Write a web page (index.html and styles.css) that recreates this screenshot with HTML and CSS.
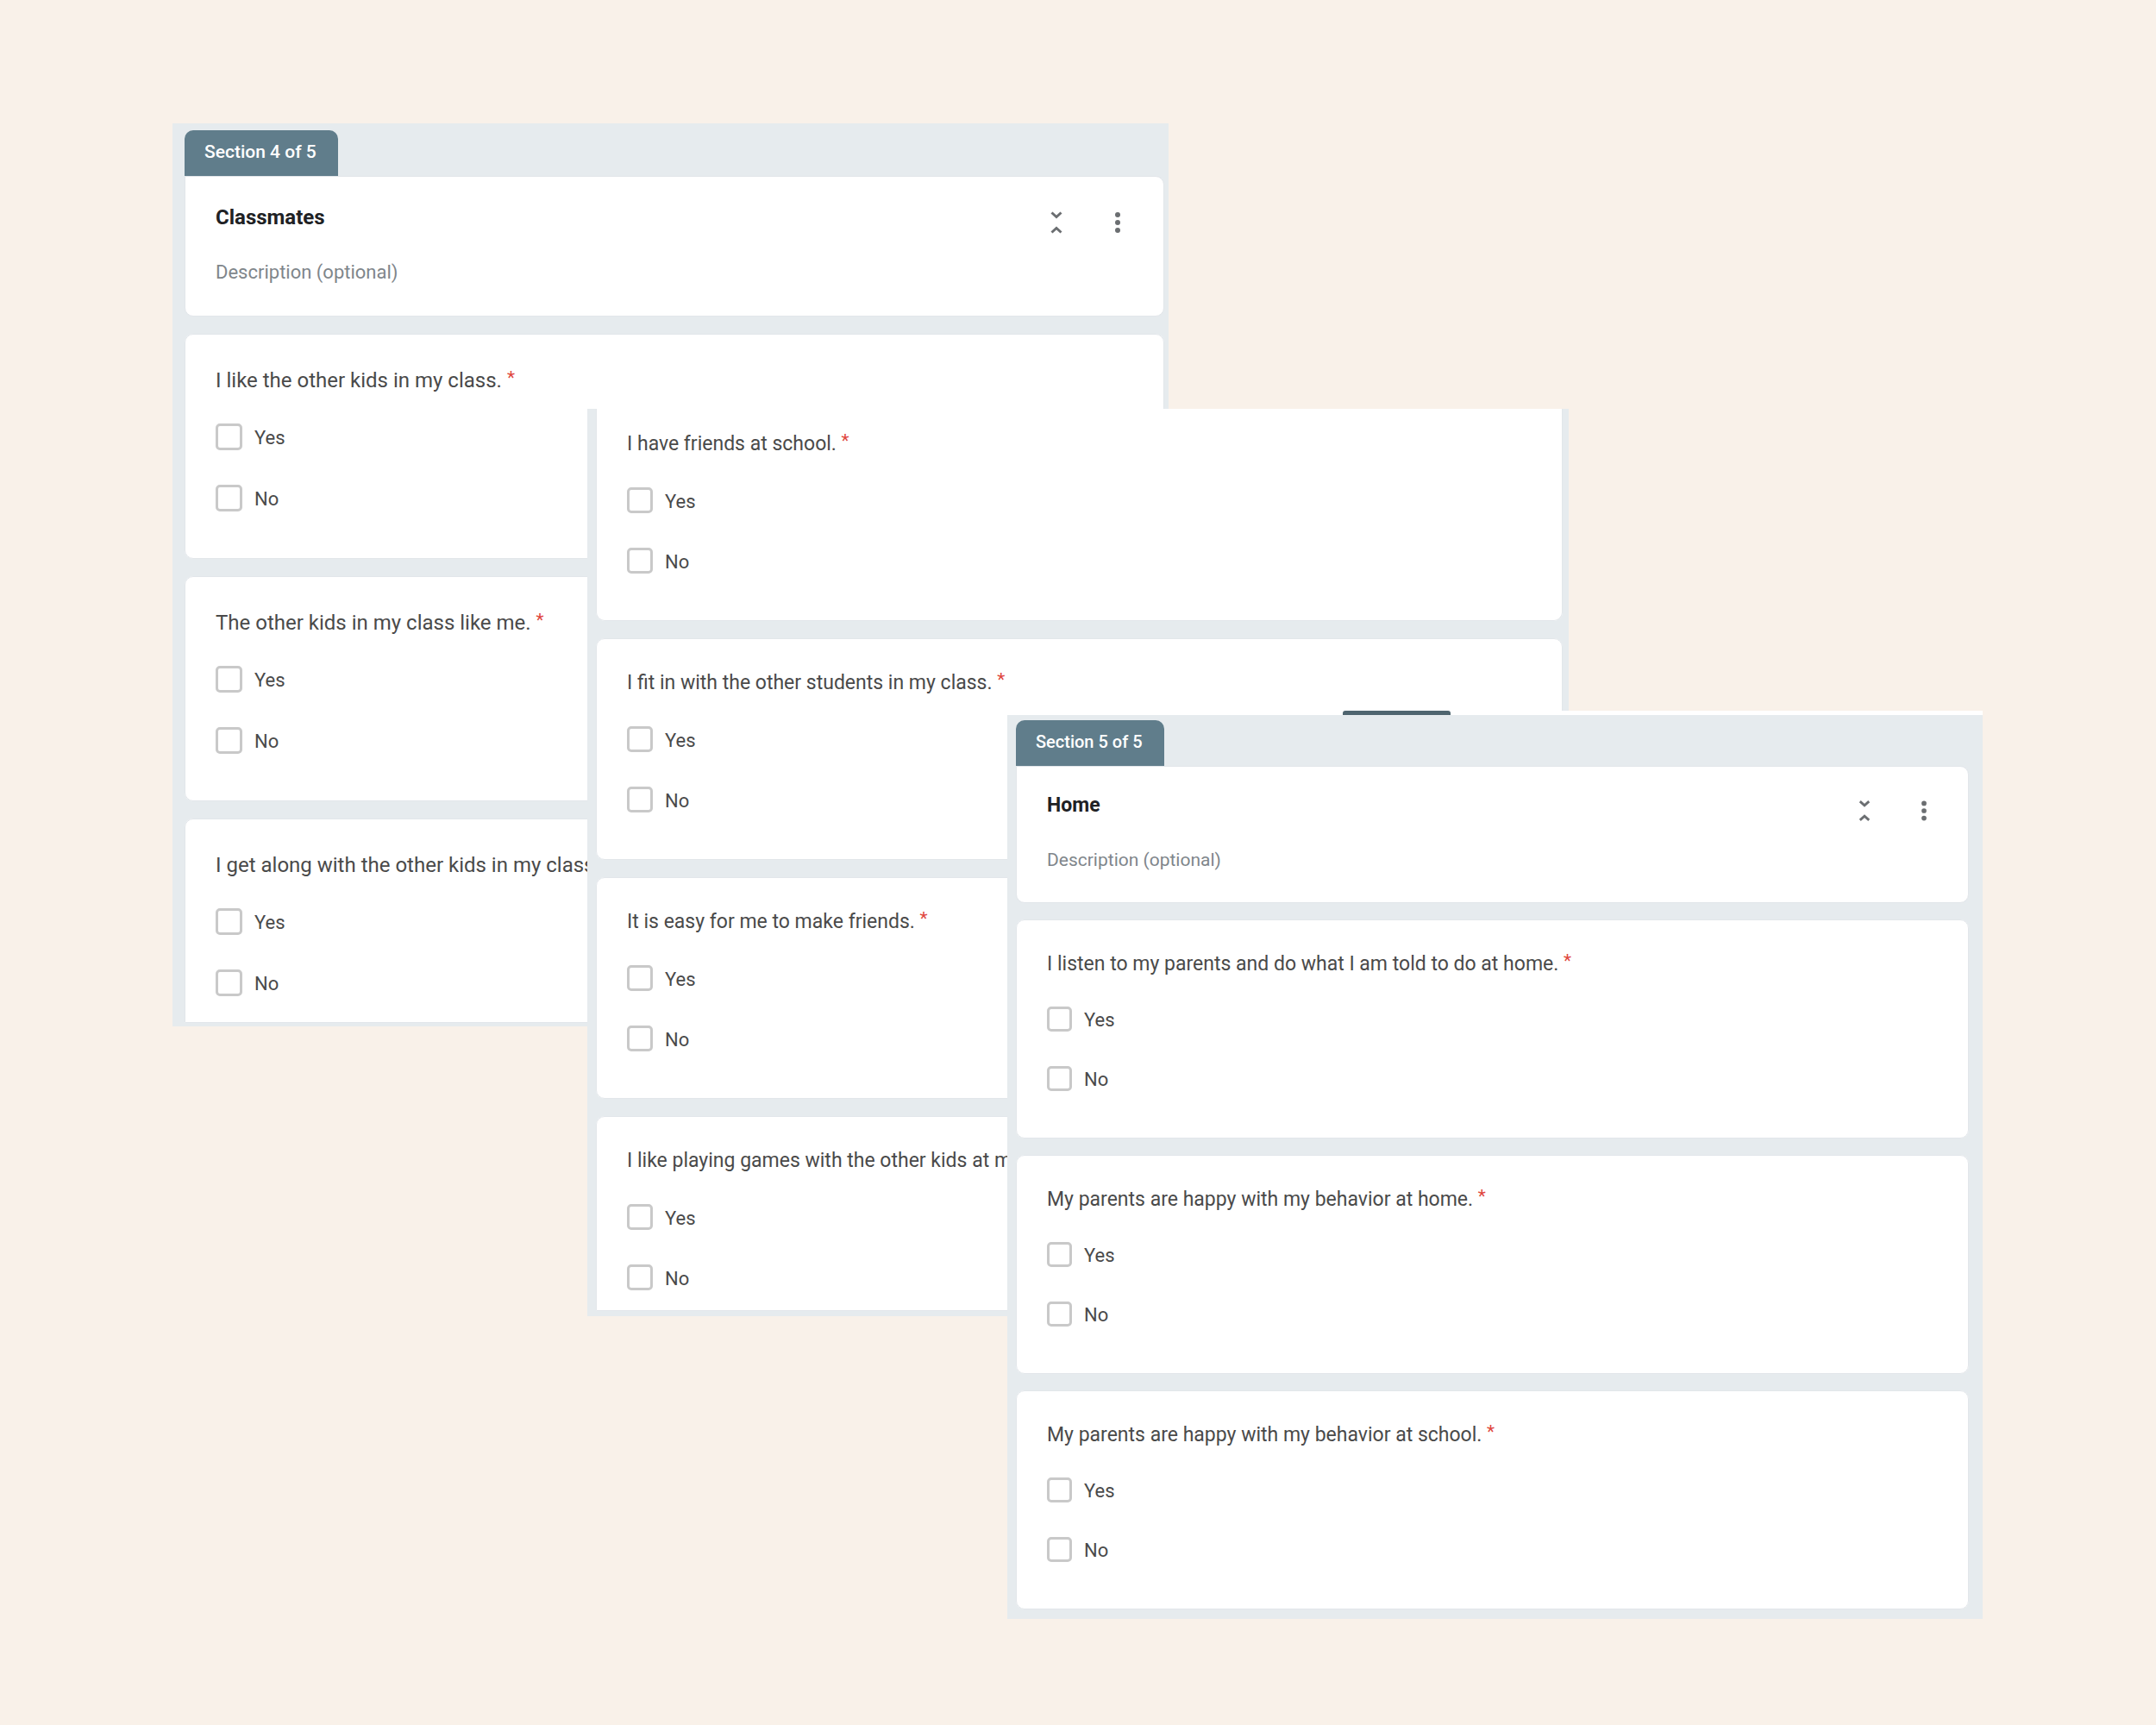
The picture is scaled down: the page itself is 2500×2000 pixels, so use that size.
FILE: index.html
```
<!DOCTYPE html>
<html lang="en">

<head>
    <meta charset="UTF-8">
    <meta name="viewport" content="width=device-width, initial-scale=1.0">
    <title>Student Survey</title>
    <link rel="stylesheet" href="styles.css">
</head>

<body>
    <main class="board">

        <!-- Section 4: Classmates -->
        <section class="panel panel-classmates">
            <span class="section-tab">Section 4 of 5</span>
            <div class="card section-header">
                <div class="section-text">
                    <h2>Classmates</h2>
                    <p class="description">Description (optional)</p>
                </div>
                <button type="button" class="icon-button" aria-label="Collapse section">
                    <svg viewBox="0 0 40 40"><path d="M14.5 8.5l5.5 5 5.5-5M14.5 31.5l5.5-5 5.5 5" /></svg>
                </button>
                <button type="button" class="icon-button" aria-label="More options">
                    <svg viewBox="0 0 40 40" class="dots"><circle cx="20" cy="11" r="3" /><circle cx="20" cy="20" r="3" /><circle cx="20" cy="29" r="3" /></svg>
                </button>
            </div>
            <fieldset class="card question">
                <legend>I like the other kids in my class. <span class="required">*</span></legend>
                <label><input type="checkbox" name="like-kids"><span>Yes</span></label>
                <label><input type="checkbox" name="like-kids"><span>No</span></label>
            </fieldset>
            <fieldset class="card question">
                <legend>The other kids in my class like me. <span class="required">*</span></legend>
                <label><input type="checkbox" name="kids-like-me"><span>Yes</span></label>
                <label><input type="checkbox" name="kids-like-me"><span>No</span></label>
            </fieldset>
            <fieldset class="card question cut-bottom">
                <legend>I get along with the other kids in my class</legend>
                <label><input type="checkbox" name="get-along"><span>Yes</span></label>
                <label><input type="checkbox" name="get-along"><span>No</span></label>
            </fieldset>
        </section>

        <!-- Section 4, continued -->
        <section class="panel panel-friends">
            <fieldset class="card question cut-top">
                <legend>I have friends at school. <span class="required">*</span></legend>
                <label><input type="checkbox" name="friends"><span>Yes</span></label>
                <label><input type="checkbox" name="friends"><span>No</span></label>
            </fieldset>
            <fieldset class="card question">
                <legend>I fit in with the other students in my class. <span class="required">*</span></legend>
                <label><input type="checkbox" name="fit-in"><span>Yes</span></label>
                <label><input type="checkbox" name="fit-in"><span>No</span></label>
            </fieldset>
            <fieldset class="card question">
                <legend>It is easy for me to make friends. <span class="required">*</span></legend>
                <label><input type="checkbox" name="make-friends"><span>Yes</span></label>
                <label><input type="checkbox" name="make-friends"><span>No</span></label>
            </fieldset>
            <fieldset class="card question cut-bottom">
                <legend>I like playing games with the other kids at m</legend>
                <label><input type="checkbox" name="games"><span>Yes</span></label>
                <label><input type="checkbox" name="games"><span>No</span></label>
            </fieldset>
        </section>

        <!-- Section 5: Home -->
        <section class="panel panel-home">
            <div class="active-bar"></div>
            <span class="section-tab">Section 5 of 5</span>
            <div class="card section-header">
                <div class="section-text">
                    <h2>Home</h2>
                    <p class="description">Description (optional)</p>
                </div>
                <button type="button" class="icon-button" aria-label="Collapse section">
                    <svg viewBox="0 0 40 40"><path d="M14.5 8.5l5.5 5 5.5-5M14.5 31.5l5.5-5 5.5 5" /></svg>
                </button>
                <button type="button" class="icon-button" aria-label="More options">
                    <svg viewBox="0 0 40 40" class="dots"><circle cx="20" cy="11" r="3" /><circle cx="20" cy="20" r="3" /><circle cx="20" cy="29" r="3" /></svg>
                </button>
            </div>
            <fieldset class="card question">
                <legend>I listen to my parents and do what I am told to do at home. <span class="required">*</span></legend>
                <label><input type="checkbox" name="listen"><span>Yes</span></label>
                <label><input type="checkbox" name="listen"><span>No</span></label>
            </fieldset>
            <fieldset class="card question">
                <legend>My parents are happy with my behavior at home. <span class="required">*</span></legend>
                <label><input type="checkbox" name="behavior-home"><span>Yes</span></label>
                <label><input type="checkbox" name="behavior-home"><span>No</span></label>
            </fieldset>
            <fieldset class="card question">
                <legend>My parents are happy with my behavior at school. <span class="required">*</span></legend>
                <label><input type="checkbox" name="behavior-school"><span>Yes</span></label>
                <label><input type="checkbox" name="behavior-school"><span>No</span></label>
            </fieldset>
        </section>

    </main>
</body>

</html>
```

FILE: styles.css
```
* {
    margin: 0;
    padding: 0;
    box-sizing: border-box;
}

body {
    font-family: Roboto, sans-serif;
    background-color: #f9f1e9;
    color: #4a4a4a;
}

/* Board that holds the overlapping panels */
.board {
    position: relative;
    min-height: 2000px;
    overflow: hidden;
}

.panel {
    position: absolute;
    display: flex;
    flex-direction: column;
    gap: var(--gap);
    background-color: #e6ebee;
    font-size: 22px;
    line-height: var(--line);
}

.panel-classmates {
    --gap: 20px;
    --title: 24px;
    --small: 22px;
    --tab: 21px;
    --line: 28px;
    --box: 31px;
    --icon: 40px;
    --header: 33px;
    --top: 39px;
    --after-title: 36px;
    --after-question: 36px;
    --cut: 30px;
    left: 8%;
    top: 143px;
    width: 46.2%;
    padding: 8px 5px 4px 14px;
}

.panel-friends {
    --gap: 20px;
    --title: 23px;
    --line: 26px;
    --box: 30px;
    --top: 38px;
    --after-question: 37px;
    --cut: 23px;
    left: 27.24%;
    top: 474px;
    width: 45.52%;
    padding: 0 7px 6px 10px;
}

.panel-home {
    --gap: 19px;
    --title: 23px;
    --small: 21px;
    --tab: 20px;
    --line: 26px;
    --box: 29px;
    --icon: 38px;
    --header: 32px;
    --top: 38px;
    --after-title: 37px;
    --after-question: 36px;
    left: 46.72%;
    top: 824px;
    width: 45.24%;
    padding: 6px 16px 11px 10px;
    border-top: 5px solid #fff;
}

/* Section label on top of the header card */
.section-tab {
    align-self: flex-start;
    margin-bottom: calc(var(--gap) * -1);
    padding: 12px 25px 15px 23px;
    border-radius: 10px 10px 0 0;
    background-color: #607d8b;
    color: #fff;
    font-size: var(--tab);
    font-weight: 500;
    line-height: 26px;
}

/* Cards */
.card {
    background-color: #fff;
    border: 1px solid #e2e6ea;
    border-radius: 10px;
}

.section-header {
    display: flex;
    align-items: flex-start;
    gap: 31px;
    padding: var(--header) var(--header) 36px 35px;
    border-top-left-radius: 0;
}

.section-text {
    flex: 1;
}

h2 {
    margin-bottom: var(--after-title);
    color: #202124;
    font-size: var(--title);
    font-weight: 700;
}

.description {
    color: #80868b;
    font-size: var(--small);
}

.icon-button {
    width: var(--icon);
    height: var(--icon);
    border: none;
    background: none;
    cursor: pointer;
}

.icon-button svg {
    display: block;
    fill: none;
    stroke: #6b6e71;
    stroke-width: 3;
}

.icon-button .dots {
    fill: #6b6e71;
    stroke: none;
}

/* Questions */
.question {
    display: flex;
    flex-direction: column;
    gap: 40px;
    min-width: 0;
    padding: var(--top) 35px 54px;
}

.question legend {
    float: left;
    margin-bottom: calc(var(--after-question) - 40px);
    font-size: var(--title);
    white-space: nowrap;
}

.question label {
    display: flex;
    align-items: center;
    gap: 14px;
    height: var(--box);
}

.question label span {
    padding-top: 3px;
}

.question input {
    width: var(--box);
    height: var(--box);
    appearance: none;
    border: 3px solid #c9c9c9;
    border-radius: 5px;
    background-color: #fff;
}

.required {
    color: #e0473e;
    font-size: 21px;
    line-height: 0;
    vertical-align: 4px;
}

/* Cards that run past the edge of their panel */
.cut-top {
    padding-top: 28px;
    border-top: none;
    border-radius: 0 0 10px 10px;
}

.cut-bottom {
    padding-bottom: var(--cut);
    border-radius: 10px 10px 0 0;
}

/* Active tab marker on the top edge */
.active-bar {
    position: absolute;
    top: -5px;
    left: 34.4%;
    width: 125px;
    height: 5px;
    border-radius: 3px 3px 0 0;
    background-color: #4f656f;
}
```
